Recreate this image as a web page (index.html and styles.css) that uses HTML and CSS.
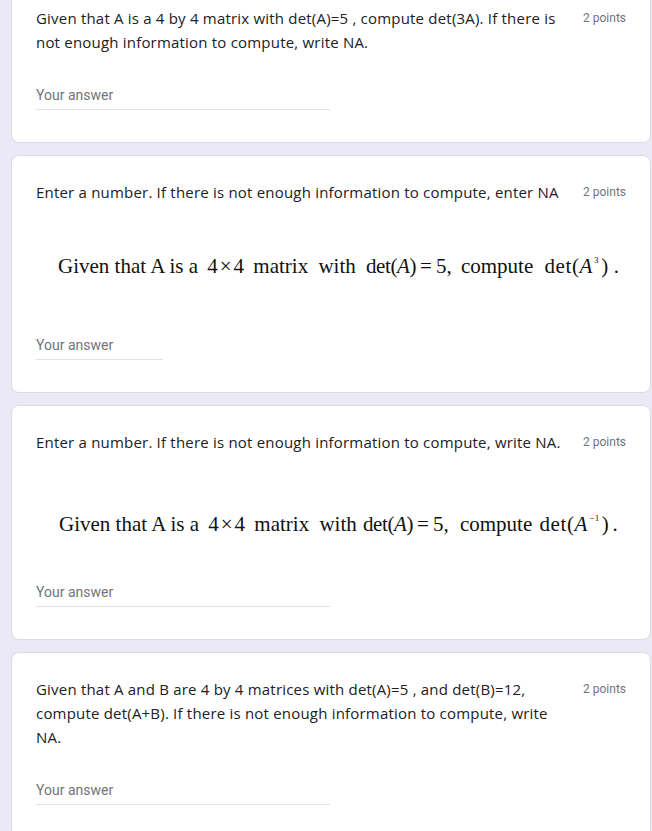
FILE: index.html
```html
<!DOCTYPE html>
<html lang="en">
<head>
<meta charset="utf-8">
<title>Quiz</title>
<link rel="stylesheet" href="styles.css">
</head>
<body>
<main class="form">
  <section class="card">
    <div class="head">
      <div class="title">Given that A is a 4 by 4 matrix with det(A)=5 , compute det(3A). If there is not enough information to compute, write NA.</div>
      <div class="points">2 points</div>
    </div>
    <div class="answer"><span class="placeholder">Your answer</span></div>
  </section>

  <section class="card">
    <div class="head">
      <div class="title">Enter a number. If there is not enough information to compute, enter NA</div>
      <div class="points">2 points</div>
    </div>
    <div class="math math-a">Given that A is a <span class="t-dim">4<span class="op">×</span>4</span> <span class="t-matrix">matrix</span> <span class="t-with">with</span> <span class="t-det">det(<i>A</i>)</span><span class="eq">=</span>5, <span class="t-compute">compute</span> <span class="t-det2">det(<i>A</i><sup>3</sup>)</span><span class="dot">.</span></div>
    <div class="answer short"><span class="placeholder">Your answer</span></div>
  </section>

  <section class="card">
    <div class="head">
      <div class="title">Enter a number. If there is not enough information to compute, write NA.</div>
      <div class="points">2 points</div>
    </div>
    <div class="math math-b">Given that A is a <span class="t-dim">4<span class="op">×</span>4</span> <span class="t-matrix">matrix</span> <span class="t-with">with</span> <span class="t-det">det(<i>A</i>)</span><span class="eq">=</span>5, <span class="t-compute">compute</span> <span class="t-det2">det(<i>A</i><sup>−1</sup>)</span><span class="dot">.</span></div>
    <div class="answer"><span class="placeholder">Your answer</span></div>
  </section>

  <section class="card">
    <div class="head">
      <div class="title">Given that A and B are 4 by 4 matrices with det(A)=5 , and det(B)=12, compute det(A+B). If there is not enough information to compute, write NA.</div>
      <div class="points">2 points</div>
    </div>
    <div class="answer"><span class="placeholder">Your answer</span></div>
  </section>
</main>
</body>
</html>
```

FILE: styles.css
```css
html, body {
  margin: 0;
  padding: 0;
  background: #ebe9f6;
}

body {
  overflow: hidden;
}

.form {
  display: flex;
  flex-direction: column;
  gap: 12px;
  margin-top: -19px;
  padding-left: 11px;
}

.card {
  box-sizing: border-box;
  width: 640px;
  background: #ffffff;
  border: 1px solid #dadce0;
  border-radius: 8px;
  padding: 24px 24px 32px 24px;
}

.head {
  display: flex;
  align-items: flex-start;
}

.title {
  flex: 1;
  font-family: "Open Sans", "Liberation Sans", sans-serif;
  font-size: 15px;
  letter-spacing: 0.2px;
  line-height: 24px;
  color: #202124;
}

.points {
  flex: none;
  margin-left: 12px;
  font-family: Roboto, "Liberation Sans", sans-serif;
  font-size: 12px;
  line-height: 24px;
  color: #70757a;
}

/* formula images */
.math {
  font-family: "Liberation Serif", "Times New Roman", serif;
  font-size: 21px;
  line-height: 32px;
  color: #111111;
  white-space: nowrap;
}

.math i {
  font-style: italic;
}

.math .t-dim { margin-left: 4px; }
.math .op { margin: 0 2px; }
.math .t-matrix { margin-left: 4px; }
.math .t-with { margin-left: 5px; }
.math .t-det { letter-spacing: -0.4px; }
.math .eq { margin: 0 4px; }
.math .t-det2 { letter-spacing: 0.6px; }

.math sup {
  font-size: 9px;
  vertical-align: 10px;
  line-height: 0;
  margin-left: 1px;
  margin-right: 2px;
}

/* second card formula */
.math-a {
  margin: 46px 0 53px 22px;
}

.math-a .t-det { margin-left: 5px; }
.math-a .t-compute { margin-left: 4px; }
.math-a .t-det2 { margin-left: 6px; }
.math-a .dot { margin-left: 5px; }

/* third card formula */
.math-b {
  margin: 54px 0 42px 23px;
}

.math-b .t-det { margin-left: 1px; }
.math-b .t-compute { margin-left: 6px; }
.math-b .t-det2 { margin-left: 2px; }
.math-b .dot { margin-left: 3px; }

.answer {
  margin-top: 31px;
  width: 294px;
  padding-bottom: 4px;
  border-bottom: 1px solid #e3e3e3;
  font-family: Roboto, "Liberation Sans", sans-serif;
  font-size: 14px;
  line-height: 20px;
}

.math + .answer {
  margin-top: 0;
}

.answer.short {
  width: 127px;
}

.placeholder {
  color: #70757a;
}
```
